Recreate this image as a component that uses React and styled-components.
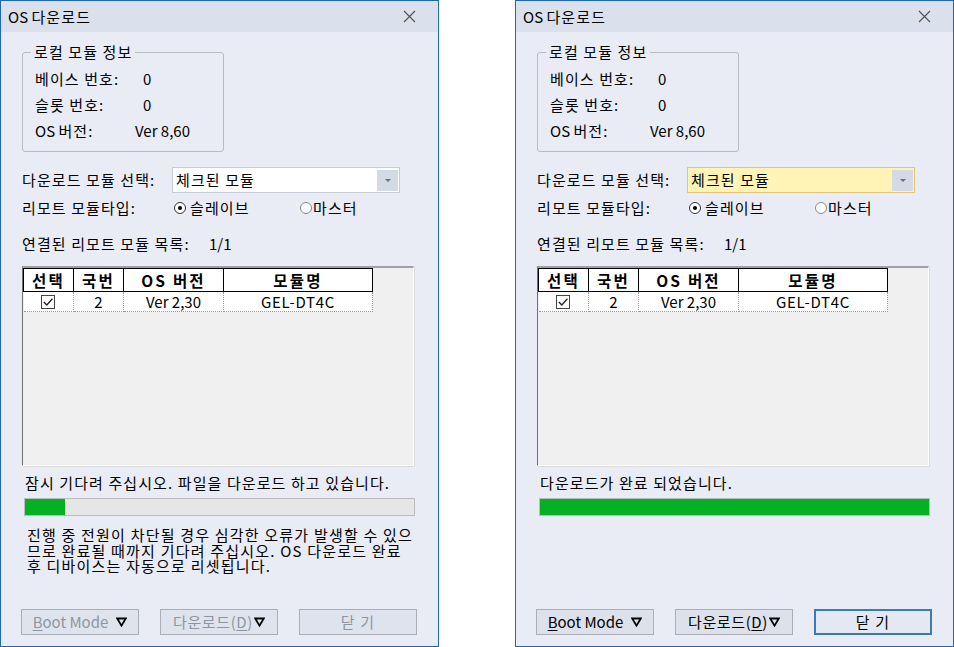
import React from 'react';
import styled, { createGlobalStyle } from 'styled-components';

const GlobalStyle = createGlobalStyle`
  html, body { margin: 0; padding: 0; background: #ffffff; }
  body {
    font-family: "Noto Sans CJK KR", "Noto Sans", sans-serif;
    font-size: 15px;
    color: #000;
  }
  * { box-sizing: border-box; }
`;

const Page = styled.div`
  display: flex;
  gap: 76px;
  width: 954px;
  height: 647px;
`;

const Window = styled.div`
  width: 439px;
  height: 647px;
  border: 1px solid #2167b1;
  background: #e9ecf5;
  display: flex;
  flex-direction: column;
  letter-spacing: 1.1px;
`;

const TitleBar = styled.div`
  flex: none;
  height: 31px;
  background: #dae0ec;
  display: flex;
  align-items: center;
  justify-content: space-between;
  padding: 0 22px 0 7px;
  line-height: 18px;
`;

const Body = styled.div`
  flex: 1;
  display: flex;
  flex-direction: column;
  padding: 11px 21px 11px 21px;
  line-height: 18px;
`;

const Latin = styled.span`
  letter-spacing: ${p => p.$ls || 0}px;
`;

const Group = styled.fieldset`
  width: 202px;
  margin: 0;
  padding: 5px 0 7px 12px;
  border: 1px solid #b6bbc6;
  border-radius: 3px;
  min-width: 0;
`;

const Legend = styled.legend`
  margin-left: -4px;
  padding: 0 3px;
  line-height: 18px;
`;

const InfoGrid = styled.div`
  display: grid;
  grid-template-columns: 100px auto;
  grid-auto-rows: 26px;
  align-items: center;
`;

const InfoValue = styled.span`
  padding-left: ${p => p.$indent}px;
  letter-spacing: 0;
`;

const FieldRow = styled.div`
  display: flex;
  align-items: center;
  height: ${p => p.$h}px;
  margin-top: ${p => p.$mt}px;
`;

const FieldLabel = styled.span`
  flex: none;
  width: ${p => p.$w}px;
`;

const Combo = styled.div`
  width: 228px;
  height: 26px;
  border: 1px solid ${p => (p.$focused ? '#e3c575' : '#c6cbd5')};
  background: ${p => (p.$focused ? '#fff3b6' : '#ffffff')};
  display: flex;
  align-items: center;
  padding-left: 3px;
`;

const ComboText = styled.span`
  flex: 1;
`;

const ComboButton = styled.span`
  width: 21px;
  height: 21px;
  margin-right: 1px;
  background: #d3d9e5;
  display: flex;
  align-items: center;
  justify-content: center;
`;

const ComboArrow = styled.span`
  width: 0;
  height: 0;
  border-left: 3px solid transparent;
  border-right: 3px solid transparent;
  border-top: 3px solid #6b6f78;
`;

const RadioGroup = styled.div`
  display: grid;
  grid-template-columns: 126px auto;
  padding-left: 2px;
`;

const RadioOption = styled.label`
  display: flex;
  align-items: center;
  gap: ${p => p.$gap}px;
`;

const RadioCircle = styled.span`
  width: 12px;
  height: 12px;
  border-radius: 50%;
  border: 1px solid ${p => (p.$checked ? '#333' : '#8a8a8a')};
  background: #fff;
  display: flex;
  align-items: center;
  justify-content: center;
  &::after {
    content: '';
    width: 4px;
    height: 4px;
    border-radius: 50%;
    background: ${p => (p.$checked ? '#000' : 'transparent')};
  }
`;

const ListBox = styled.div`
  margin-top: 11px;
  width: 392px;
  height: 200px;
  flex: none;
  background: #f0f0f0;
  border-top: 2px solid #a0a0a0;
  border-left: 1px solid #707070;
  border-right: 1px solid #ffffff;
  border-bottom: 1px solid #ffffff;
  box-shadow: 1px 1px 0 #dcdcdc;
`;

const Grid = styled.table`
  border-collapse: collapse;
  table-layout: fixed;
  width: 349px;
`;

const HeadCell = styled.th`
  width: ${p => p.$w}px;
  height: 23px;
  padding: 0;
  background: #ffffff;
  border: 1px solid #000;
  font-weight: 700;
  font-size: 15.5px;
  letter-spacing: 2.2px;
  text-align: center;
  line-height: 18px;
`;

const Cell = styled.td`
  height: 20px;
  padding: 0;
  background: #ffffff;
  border-right: 1px dotted #9a9a9a;
  border-bottom: 1px dotted #9a9a9a;
  text-align: center;
  line-height: 18px;
  letter-spacing: ${p => p.$ls || 0}px;
`;

const CheckBox = styled.span`
  display: inline-flex;
  vertical-align: middle;
  width: 14px;
  height: 14px;
  border: 1px solid #444;
  background: #fff;
  align-items: center;
  justify-content: center;
  margin-top: -2px;
`;

const Status = styled.div`
  margin-top: 7px;
  height: 20px;
  line-height: 20px;
  padding-left: 3px;
  white-space: nowrap;
`;

const Progress = styled.div`
  margin-top: 5px;
  margin-left: 2px;
  width: 391px;
  height: 18px;
  border: 1px solid #bcbcbc;
  background: #e6e6e6;
  display: flex;
`;

const ProgressFill = styled.div`
  height: 100%;
  background: #06b025;
`;

const Warning = styled.div`
  margin-top: 11px;
  padding-left: 5px;
  line-height: 15.5px;
  white-space: nowrap;
  letter-spacing: 1.2px;
`;

const Footer = styled.div`
  margin-top: auto;
  margin-left: -1px;
  display: grid;
  grid-template-columns: repeat(3, 118px);
  gap: 21px;
`;

const Button = styled.button`
  height: 26px;
  padding: 0;
  font: inherit;
  font-size: 15px;
  line-height: 18px;
  color: ${p => (p.$disabled ? '#8f95a0' : '#000')};
  background: ${p => (p.$default ? '#e3e8f2' : p.$disabled ? '#dfe3ed' : '#dce1eb')};
  border: ${p => (p.$default ? '2px solid #3b7ab5' : '1px solid #a9aeb9')};
  display: flex;
  align-items: center;
  justify-content: center;
  gap: ${p => p.$gap || 0}px;
  letter-spacing: ${p => p.$ls}px;
`;

const Key = styled.u`
  text-underline-offset: 2px;
`;

const DownTriangle = () => (
  <svg width="11" height="10" viewBox="0 0 11 10">
    <polygon points="1.2,1.5 9.8,1.5 5.5,8.6" fill="none" stroke="#000" strokeWidth="1.8" strokeLinejoin="miter" />
  </svg>
);

const CloseIcon = () => (
  <svg width="13" height="13" viewBox="0 0 13 13">
    <path d="M1 1 L12 12 M12 1 L1 12" stroke="#555" strokeWidth="1.2" fill="none" />
  </svg>
);

const CheckMark = () => (
  <svg width="12" height="12" viewBox="0 0 12 12">
    <path d="M1.8 6 L4.8 9 L10.4 2.8" stroke="#222" strokeWidth="1.3" fill="none" />
  </svg>
);

function Dialog({ done }) {
  return (
    <Window>
      <TitleBar>
        <span>
          <Latin>OS </Latin>다운로드
        </span>
        <CloseIcon />
      </TitleBar>
      <Body>
        <Group>
          <Legend>로컬 모듈 정보</Legend>
          <InfoGrid>
            <span>베이스 번호:</span>
            <InfoValue $indent={8}>0</InfoValue>
            <span>슬롯 번호:</span>
            <InfoValue $indent={8}>0</InfoValue>
            <span>
              <Latin>OS </Latin>버전:
            </span>
            <InfoValue $indent={0}>Ver 8,60</InfoValue>
          </InfoGrid>
        </Group>

        <FieldRow $h={26} $mt={15}>
          <FieldLabel $w={150}>다운로드 모듈 선택:</FieldLabel>
          <Combo $focused={done}>
            <ComboText>체크된 모듈</ComboText>
            <ComboButton>
              <ComboArrow />
            </ComboButton>
          </Combo>
        </FieldRow>

        <FieldRow $h={22} $mt={4}>
          <FieldLabel $w={150}>리모트 모듈타입:</FieldLabel>
          <RadioGroup>
            <RadioOption $gap={4}>
              <RadioCircle $checked />
              <span>슬레이브</span>
            </RadioOption>
            <RadioOption $gap={1}>
              <RadioCircle />
              <span>마스터</span>
            </RadioOption>
          </RadioGroup>
        </FieldRow>

        <FieldRow $h={22} $mt={14}>
          <FieldLabel $w={187}>연결된 리모트 모듈 목록:</FieldLabel>
          <Latin>1/1</Latin>
        </FieldRow>

        <ListBox>
          <Grid>
            <thead>
              <tr>
                <HeadCell $w={50}>선택</HeadCell>
                <HeadCell $w={50}>국번</HeadCell>
                <HeadCell $w={100}>OS 버전</HeadCell>
                <HeadCell $w={149}>모듈명</HeadCell>
              </tr>
            </thead>
            <tbody>
              <tr>
                <Cell>
                  <CheckBox>
                    <CheckMark />
                  </CheckBox>
                </Cell>
                <Cell>2</Cell>
                <Cell>Ver 2,30</Cell>
                <Cell $ls={0.7}>GEL-DT4C</Cell>
              </tr>
            </tbody>
          </Grid>
        </ListBox>

        <Status>{done ? '다운로드가 완료 되었습니다.' : '잠시 기다려 주십시오. 파일을 다운로드 하고 있습니다.'}</Status>
        <Progress>
          <ProgressFill style={{ width: done ? '100%' : '40px' }} />
        </Progress>

        {!done && (
          <Warning>
            진행 중 전원이 차단될 경우 심각한 오류가 발생할 수 있으
            <br />
            므로 완료될 때까지 기다려 주십시오. OS 다운로드 완료
            <br />
            후 디바이스는 자동으로 리셋됩니다.
          </Warning>
        )}

        <Footer>
          <Button $disabled={!done} $gap={8} $ls={0}>
            <span>
              <Key>B</Key>oot Mode
            </span>
            <DownTriangle />
          </Button>
          <Button $disabled={!done} $gap={1} $ls={0.6}>
            <span>
              다운로드(<Key>D</Key>)
            </span>
            <DownTriangle />
          </Button>
          <Button $disabled={!done} $default={done} $ls={1.1}>
            닫 기
          </Button>
        </Footer>
      </Body>
    </Window>
  );
}

export default function App() {
  return (
    <>
      <GlobalStyle />
      <Page>
        <Dialog done={false} />
        <Dialog done />
      </Page>
    </>
  );
}
